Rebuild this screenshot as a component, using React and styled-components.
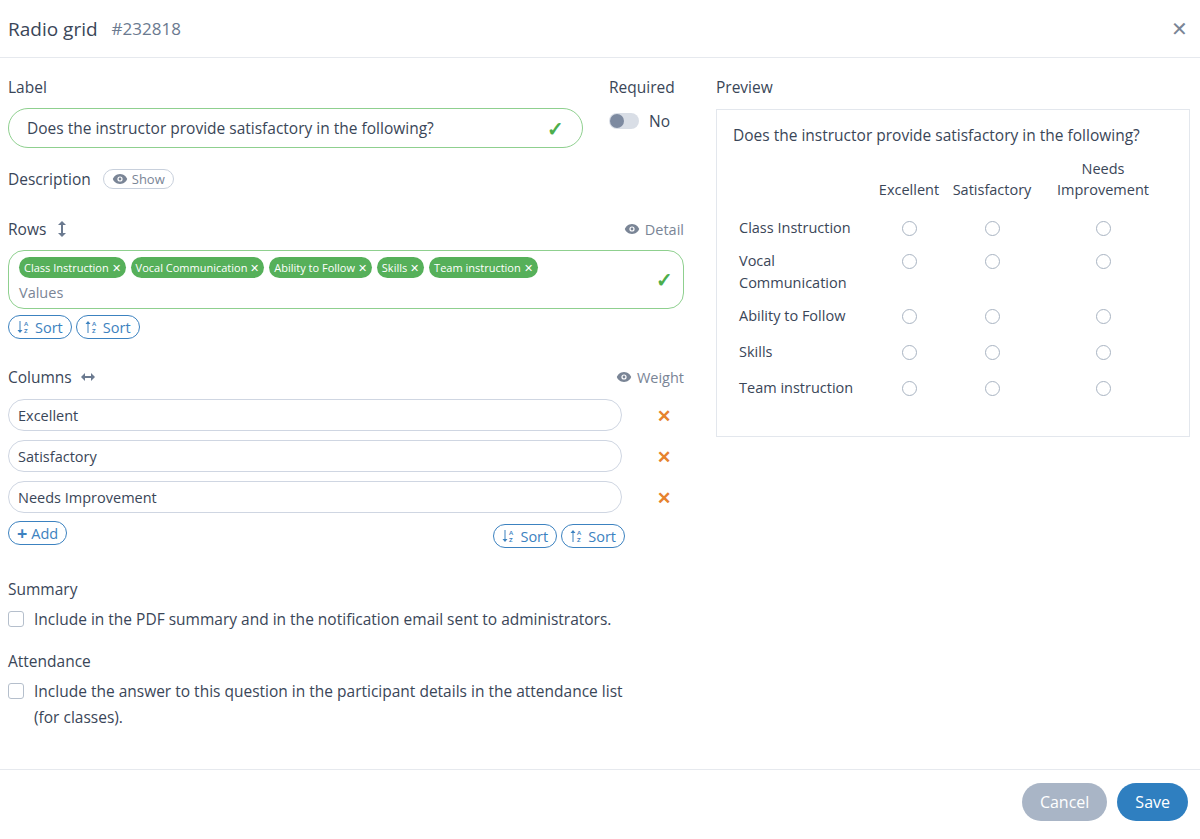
import React from "react";
import styled, { createGlobalStyle } from "styled-components";

const G = createGlobalStyle`
  body{margin:0;font-family:"Open Sans",Lato,sans-serif;color:#3a4658;background:#fff;}
  *{box-sizing:border-box;}
`;
const Page = styled.div`width:1200px;height:839px;display:flex;flex-direction:column;`;
const Header = styled.div`height:58px;border-bottom:1px solid #e6e9ee;display:flex;align-items:center;padding:0 8px;gap:14px;`;
const Title = styled.div`font-size:19px;color:#3a4658;`;
const Id = styled.div`font-size:17px;color:#6b7a90;flex:1;`;
const Close = styled.div`font-size:20px;color:#7a8596;margin-right:4px;`;
const Body = styled.div`flex:1;display:flex;padding:18px 12px 0 8px;gap:32px;`;
const Left = styled.div`width:676px;display:flex;flex-direction:column;`;
const Right = styled.div`flex:1;display:flex;flex-direction:column;`;
const Lbl = styled.div`font-size:15.5px;line-height:22px;color:#3a4658;display:flex;align-items:center;gap:8px;`;
const Row = styled.div`display:flex;align-items:${p=>p.$align||"center"};justify-content:space-between;gap:${p=>p.$gap||0}px;margin-top:${p=>p.$mt||0}px;`;
const Pill = styled.div`height:${p=>p.$h||40}px;border:1px solid ${p=>p.$green?"#8fd08f":"#cfd6e2"};border-radius:20px;display:flex;align-items:center;justify-content:space-between;padding:0 ${p=>p.$pl||18}px;font-size:${p=>p.$fs||15.5}px;width:${p=>p.$w||"auto"};color:#3a4658;`;
const Check = styled.span`color:#4cae4c;font-size:20px;font-weight:bold;`;
const Toggle = styled.div`width:30px;height:16px;border-radius:8px;background:#d9dee6;position:relative;
  &::after{content:"";position:absolute;left:1px;top:1px;width:14px;height:14px;border-radius:50%;background:#7d8aa0;}`;
const SmallBtn = styled.span`display:inline-flex;align-items:center;gap:4px;border:1px solid #c8d0dc;border-radius:12px;padding:0 8px;font-size:13px;color:#7a8596;`;
const Link = styled.span`color:#7a8596;font-size:14.5px;display:flex;align-items:center;gap:5px;`;
const TagBox = styled.div`border:1px solid #8fd08f;border-radius:16px;padding:4px 10px;height:59px;display:flex;justify-content:space-between;align-items:center;`;
const Tags = styled.div`display:flex;gap:5px;`;
const Tag = styled.span`background:#56b05a;color:#fff;border-radius:12px;font-size:11px;padding:0 5px;height:21px;display:inline-flex;align-items:center;white-space:nowrap;`;
const Blue = styled.span`display:inline-flex;align-items:center;gap:4px;border:1px solid #3c82c0;color:#3c82c0;border-radius:12px;padding:0 8px;height:24px;font-size:14.5px;`;
const X = styled.span`color:#e6822e;font-size:17px;font-weight:bold;width:40px;text-align:center;`;
const CheckRow = styled.label`display:flex;gap:10px;font-size:15.5px;line-height:26px;margin-top:${p=>p.$mt||0}px;`;
const Box = styled.span`width:16px;height:16px;border:1px solid #b5bfcc;border-radius:3px;margin-top:5px;flex:none;`;
const Panel = styled.div`border:1px solid #e3e7ed;margin-top:11px;height:328px;padding:14px 16px 0 16px;`;
const Q = styled.div`font-size:15.5px;color:#3a4658;margin-bottom:12px;`;
const Grid = styled.div`display:grid;grid-template-columns:134px 84px 82px 140px;font-size:14.5px;align-items:center;`;
const HC = styled.div`text-align:center;padding-bottom:10px;line-height:21px;align-self:end;`;
const RL = styled.div`line-height:22px;padding:${p=>p.$pad??7}px 0 ${p=>p.$pad??7}px 6px;`;
const Radio = styled.div`width:15px;height:15px;border:1px solid #a9b4c2;border-radius:50%;justify-self:center;align-self:${p=>p.$top?"start":"center"};margin-top:${p=>p.$top?8:0}px;`;
const Footer = styled.div`height:70px;border-top:1px solid #e6e9ee;display:flex;justify-content:flex-end;align-items:center;gap:10px;padding:0 12px 6px;`;
const Btn = styled.div`height:38px;border-radius:19px;padding:0 18px;display:flex;align-items:center;font-size:16px;color:#fff;background:${p=>p.$bg};`;

const Eye=()=>(<svg width="16" height="12" viewBox="0 0 16 12"><path d="M8 1C4 1 1.5 4 .8 6c.7 2 3.2 5 7.2 5s6.5-3 7.2-5C14.5 4 12 1 8 1z" fill="currentColor"/><circle cx="8" cy="6" r="2.6" fill="#fff"/><circle cx="8" cy="6" r="1.4" fill="currentColor"/></svg>);
const SortI=({up})=>(<svg width="14" height="14" viewBox="0 0 14 14" fill="currentColor"><path d={up?"M3 1L0.5 4h2v9h1V4h2z":"M3 13L0.5 10h2V1h1v9h2z"}/><text x="7" y="6" fontSize="6" fontWeight="bold" fontFamily="Lato">A</text><text x="7" y="13" fontSize="6" fontWeight="bold" fontFamily="Lato">Z</text></svg>);
const Arrow=({v})=>(<svg width="16" height="18" viewBox="0 0 16 18" fill="#6b7a90">{v?<path d="M8 1l4 4H9v8h3l-4 4-4-4h3V5H4z"/>:<path d="M1 9l4-4v3h6V5l4 4-4 4v-3H5v3z"/>}</svg>);

const rows=[["Class Instruction"],["Vocal Communication",true],["Ability to Follow"],["Skills"],["Team instruction"]];
export default function App(){
  return <Page><G/>
    <Header><Title>Radio grid</Title><Id>#232818</Id><Close>✕</Close></Header>
    <Body>
      <Left>
        <Row $align="flex-start">
          <div style={{width:575}}>
            <Lbl>Label</Lbl>
            <Pill $green style={{marginTop:10}}>Does the instructor provide satisfactory in the following? <Check>✓</Check></Pill>
          </div>
          <div style={{width:75}}>
            <Lbl>Required</Lbl>
            <Row $gap={10} style={{justifyContent:"flex-start",marginTop:12}}><Toggle/><span style={{fontSize:15.5}}>No</span></Row>
          </div>
        </Row>
        <Row $mt={20} style={{justifyContent:"flex-start",gap:12}}><Lbl>Description</Lbl><SmallBtn><Eye/>Show</SmallBtn></Row>
        <Row $mt={28}><Lbl>Rows <Arrow v/></Lbl><Link><Eye/>Detail</Link></Row>
        <TagBox style={{marginTop:10}}>
          <div><Tags>{rows.map(r=><Tag key={r[0]}>{r[0]} ✕</Tag>)}</Tags><div style={{color:"#7a8596",fontSize:14.5,marginTop:5}}>Values</div></div>
          <Check>✓</Check>
        </TagBox>
        <Row $mt={6} style={{justifyContent:"flex-start",gap:4}}><Blue><SortI/>Sort</Blue><Blue><SortI up/>Sort</Blue></Row>
        <Row $mt={27}><Lbl>Columns <Arrow/></Lbl><Link><Eye/>Weight</Link></Row>
        {["Excellent","Satisfactory","Needs Improvement"].map((c,i)=>(
          <Row key={c} $mt={i?9:11} style={{justifyContent:"flex-start",gap:22}}><Pill $h={32} $w="617px" $pl={9} $fs={14.5}>{c}</Pill><X>✕</X></Row>))}
        <Row $mt={8} style={{width:617,alignItems:"flex-start"}}><Blue><b style={{fontSize:18}}>+</b> Add</Blue><Row $gap={4} $mt={3}><Blue><SortI/>Sort</Blue><Blue><SortI up/>Sort</Blue></Row></Row>
        <Lbl style={{marginTop:30}}>Summary</Lbl>
        <CheckRow $mt={6}><Box/>Include in the PDF summary and in the notification email sent to administrators.</CheckRow>
        <Lbl style={{marginTop:18}}>Attendance</Lbl>
        <CheckRow $mt={6}><Box/><span>Include the answer to this question in the participant details in the attendance list<br/>(for classes).</span></CheckRow>
      </Left>
      <Right>
        <Lbl>Preview</Lbl>
        <Panel>
          <Q>Does the instructor provide satisfactory in the following?</Q>
          <Grid>
            <div/><HC>Excellent</HC><HC>Satisfactory</HC><HC>Needs<br/>Improvement</HC>
            {rows.map(([r,two])=>(<React.Fragment key={r}>
              <RL $pad={two?4:7}>{two?<>Vocal<br/>Communication</>:r}</RL><Radio $top={two}/><Radio $top={two}/><Radio $top={two}/>
            </React.Fragment>))}
          </Grid>
        </Panel>
      </Right>
    </Body>
    <Footer><Btn $bg="#a9b5c6">Cancel</Btn><Btn $bg="#2f7fc0">Save</Btn></Footer>
  </Page>;
}
